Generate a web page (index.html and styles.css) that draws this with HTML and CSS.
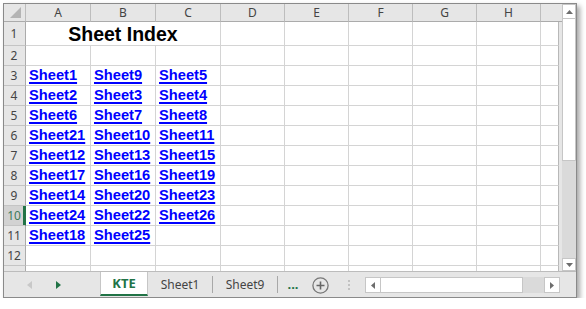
FILE: index.html
```html
<!DOCTYPE html>
<html>
<head>
<meta charset="utf-8">
<link rel="stylesheet" href="styles.css">
</head>
<body>
<div class="win">
  <div class="main">
    <div class="sheet">
      <div class="colhdr">
        <div class="corner"><svg width="12" height="12" viewBox="0 0 12 12"><polygon points="11,0 11,11 0,11" fill="#b4b4b4"/></svg></div>
        <div>A</div><div>B</div><div>C</div><div>D</div><div>E</div><div>F</div><div>G</div><div>H</div><div class="last"></div>
      </div>
      <div class="row r1"><div class="rh">1</div><div class="c title">Sheet Index</div><div class="c"></div><div class="c"></div><div class="c"></div><div class="c"></div><div class="c"></div><div class="c"></div><div class="gap"></div></div>
      <div class="row"><div class="rh">2</div><div class="c"></div><div class="c"></div><div class="c"></div><div class="c"></div><div class="c"></div><div class="c"></div><div class="c"></div><div class="c"></div><div class="c"></div><div class="gap"></div></div>
      <div class="row"><div class="rh">3</div><div class="c"><a>Sheet1</a></div><div class="c"><a>Sheet9</a></div><div class="c"><a>Sheet5</a></div><div class="c"></div><div class="c"></div><div class="c"></div><div class="c"></div><div class="c"></div><div class="c"></div><div class="gap"></div></div>
      <div class="row"><div class="rh">4</div><div class="c"><a>Sheet2</a></div><div class="c"><a>Sheet3</a></div><div class="c"><a>Sheet4</a></div><div class="c"></div><div class="c"></div><div class="c"></div><div class="c"></div><div class="c"></div><div class="c"></div><div class="gap"></div></div>
      <div class="row"><div class="rh">5</div><div class="c"><a>Sheet6</a></div><div class="c"><a>Sheet7</a></div><div class="c"><a>Sheet8</a></div><div class="c"></div><div class="c"></div><div class="c"></div><div class="c"></div><div class="c"></div><div class="c"></div><div class="gap"></div></div>
      <div class="row"><div class="rh">6</div><div class="c"><a>Sheet21</a></div><div class="c"><a>Sheet10</a></div><div class="c"><a>Sheet11</a></div><div class="c"></div><div class="c"></div><div class="c"></div><div class="c"></div><div class="c"></div><div class="c"></div><div class="gap"></div></div>
      <div class="row"><div class="rh">7</div><div class="c"><a>Sheet12</a></div><div class="c"><a>Sheet13</a></div><div class="c"><a>Sheet15</a></div><div class="c"></div><div class="c"></div><div class="c"></div><div class="c"></div><div class="c"></div><div class="c"></div><div class="gap"></div></div>
      <div class="row"><div class="rh">8</div><div class="c"><a>Sheet17</a></div><div class="c"><a>Sheet16</a></div><div class="c"><a>Sheet19</a></div><div class="c"></div><div class="c"></div><div class="c"></div><div class="c"></div><div class="c"></div><div class="c"></div><div class="gap"></div></div>
      <div class="row"><div class="rh">9</div><div class="c"><a>Sheet14</a></div><div class="c"><a>Sheet20</a></div><div class="c"><a>Sheet23</a></div><div class="c"></div><div class="c"></div><div class="c"></div><div class="c"></div><div class="c"></div><div class="c"></div><div class="gap"></div></div>
      <div class="row"><div class="rh active">10</div><div class="c"><a>Sheet24</a></div><div class="c"><a>Sheet22</a></div><div class="c"><a>Sheet26</a></div><div class="c"></div><div class="c"></div><div class="c"></div><div class="c"></div><div class="c"></div><div class="c"></div><div class="gap"></div></div>
      <div class="row"><div class="rh">11</div><div class="c"><a>Sheet18</a></div><div class="c"><a>Sheet25</a></div><div class="c"></div><div class="c"></div><div class="c"></div><div class="c"></div><div class="c"></div><div class="c"></div><div class="c"></div><div class="gap"></div></div>
      <div class="row"><div class="rh">12</div><div class="c"></div><div class="c"></div><div class="c"></div><div class="c"></div><div class="c"></div><div class="c"></div><div class="c"></div><div class="c"></div><div class="c"></div><div class="gap"></div></div>
      <div class="row part"><div class="rh"></div><div class="c"></div><div class="c"></div><div class="c"></div><div class="c"></div><div class="c"></div><div class="c"></div><div class="c"></div><div class="c"></div><div class="c"></div><div class="gap"></div></div>
    </div>
    <div class="vscroll">
      <div class="sbox up"><svg width="7" height="4" viewBox="0 0 7 4"><polygon points="0,4 7,4 3.5,0" fill="#6d6d6d"/></svg></div>
      <div class="vthumb"></div>
      <div class="vtrack"></div>
      <div class="sbox down"><svg width="7" height="4" viewBox="0 0 7 4"><polygon points="0,0 7,0 3.5,4" fill="#6d6d6d"/></svg></div>
    </div>
  </div>
  <div class="tabbar">
    <div class="nav">
      <svg class="navl" width="5" height="8" viewBox="0 0 5 8"><polygon points="5,0 5,8 0,4" fill="#c8c8c8"/></svg>
      <svg class="navr" width="5" height="8" viewBox="0 0 5 8"><polygon points="0,0 0,8 5,4" fill="#217346"/></svg>
    </div>
    <div class="tab active">KTE</div>
    <div class="tab">Sheet1</div>
    <div class="sep"></div>
    <div class="tab">Sheet9</div>
    <div class="sep"></div>
    <div class="more">...</div>
    <div class="plus"><svg width="17" height="17" viewBox="0 0 17 17"><circle cx="8.5" cy="8.5" r="7.6" fill="none" stroke="#777" stroke-width="1.3"/><path d="M8.5 4.5v8M4.5 8.5h8" stroke="#666" stroke-width="1.6"/></svg></div>
    <div class="dots"><span></span><span></span><span></span></div>
    <div class="hscroll">
      <div class="hbox"><svg width="4" height="7" viewBox="0 0 4 7"><polygon points="4,0 4,7 0,3.5" fill="#6d6d6d"/></svg></div>
      <div class="hthumb"></div>
      <div class="htrack"></div>
      <div class="hbox"><svg width="4" height="7" viewBox="0 0 4 7"><polygon points="0,0 0,7 4,3.5" fill="#6d6d6d"/></svg></div>
    </div>
  </div>
</div>
</body>
</html>
```

FILE: styles.css
```css
html, body {
  margin: 0;
  background: #ffffff;
}
body {
  padding: 3px 0 0 3px;
}
.win {
  width: 574px;
  height: 295px;
  box-sizing: border-box;
  border: 1px solid #8a8a8a;
  background: #e6e6e6;
  box-shadow: 3px 3px 5px rgba(0, 0, 0, 0.35);
  display: flex;
  flex-direction: column;
}
.main {
  display: flex;
  height: 267px;
}
.sheet {
  width: 558px;
  display: flex;
  flex-direction: column;
  background: #ffffff;
  overflow: hidden;
}
.colhdr {
  display: grid;
  grid-template-columns: 22px 65px 65px 65px 64px 64px 64px 64px 64px 21px;
  height: 18px;
  flex: none;
  background: #e6e6e6;
}
.colhdr > div {
  box-sizing: border-box;
  border-right: 1px solid #bdbdbd;
  border-bottom: 1px solid #ababab;
  text-align: center;
  font: 12px "Noto Sans", sans-serif;
  color: #444444;
  line-height: 17px;
}
.colhdr > .last {
  border-right: none;
}
.colhdr > .corner {
  display: flex;
  align-items: flex-end;
  justify-content: flex-end;
  padding: 0 3px 2px 0;
}
.row {
  display: grid;
  grid-template-columns: 22px 65px 65px 65px 64px 64px 64px 64px 64px 18px 3px;
  height: 20px;
  flex: none;
}
.row.r1 {
  height: 24px;
  grid-template-columns: 22px 195px 64px 64px 64px 64px 64px 18px 3px;
}
.row.part {
  height: 5px;
}
.row > div {
  box-sizing: border-box;
  border-right: 1px solid #d4d4d4;
  border-bottom: 1px solid #d4d4d4;
  min-width: 0;
}
.row.part > div {
  border-bottom: none;
}
.row > .rh {
  background: #e6e6e6;
  border-right-color: #ababab;
  border-bottom-color: #c4c4c4;
  font: 12px "Noto Sans", sans-serif;
  color: #444444;
  display: flex;
  align-items: center;
  justify-content: center;
  padding-right: 1px;
}
.row > .rh.active {
  background: #d2d2d2;
  color: #3d7a5a;
  box-shadow: inset -2px 0 0 #217346;
  border-right-color: #217346;
}
.row > .gap {
  background: #e6e6e6;
  border: none;
}
.row > div:nth-last-child(2) {
  border-right-color: #b8b8b8;
}
.c {
  white-space: nowrap;
  overflow: visible;
  padding-left: 3px;
  font: bold 14.67px/19px "Liberation Sans", Arial, sans-serif;
}
.c a {
  color: #0000ff;
  text-decoration: underline;
  text-decoration-thickness: 2px;
  text-underline-offset: 2px;
}
.c.title {
  text-align: center;
  font-size: 19.5px;
  line-height: 22px;
  padding: 1px 0 0 0;
  color: #000000;
}
.vscroll {
  width: 14px;
  display: flex;
  flex-direction: column;
  background: #e6e6e6;
}
.sbox {
  box-sizing: border-box;
  background: #ffffff;
  border: 1px solid #c6c6c6;
  display: flex;
  align-items: center;
  justify-content: center;
}
.sbox.up {
  height: 15px;
}
.sbox.down {
  height: 13px;
}
.vthumb {
  height: 142px;
  box-sizing: border-box;
  background: #ffffff;
  border: 1px solid #c6c6c6;
  border-top: none;
}
.vtrack {
  height: 97px;
  background: #dadada;
}
.tabbar {
  height: 26px;
  box-sizing: border-box;
  border-top: 1px solid #bcbcbc;
  display: flex;
  font: 12px "Noto Sans", sans-serif;
  color: #444444;
}
.nav {
  width: 96px;
  display: flex;
  align-items: center;
  padding-left: 23px;
  box-sizing: border-box;
  gap: 24px;
}
.tab {
  width: 64px;
  display: flex;
  align-items: center;
  justify-content: center;
  height: 24px;
}
.tab.active {
  width: 48px;
  box-sizing: border-box;
  background: #ffffff;
  border-left: 1px solid #c6c6c6;
  border-right: 1px solid #c6c6c6;
  border-bottom: 2px solid #217346;
  color: #217346;
  font-weight: bold;
  font-size: 13px;
}
.sep {
  width: 1px;
  height: 17px;
  margin-top: 4px;
  background: #a8a8a8;
}
.more {
  width: 30px;
  color: #217346;
  font-weight: bold;
  font-size: 13px;
  text-align: center;
  line-height: 24px;
}
.plus {
  width: 24px;
  display: flex;
  align-items: center;
  justify-content: center;
  height: 26px;
}
.dots {
  width: 33px;
  display: flex;
  flex-direction: column;
  align-items: center;
  justify-content: center;
  gap: 2px;
  height: 25px;
}
.dots span {
  width: 2px;
  height: 2px;
  background: #c2c2c2;
}
.hscroll {
  width: 195px;
  height: 16px;
  margin-top: 5px;
  display: flex;
}
.hbox {
  width: 16px;
  box-sizing: border-box;
  background: #ffffff;
  border: 1px solid #c6c6c6;
  display: flex;
  align-items: center;
  justify-content: center;
}
.hthumb {
  width: 142px;
  box-sizing: border-box;
  background: #ffffff;
  border: 1px solid #c6c6c6;
  border-left: none;
}
.htrack {
  width: 21px;
  background: #dadada;
}
```
